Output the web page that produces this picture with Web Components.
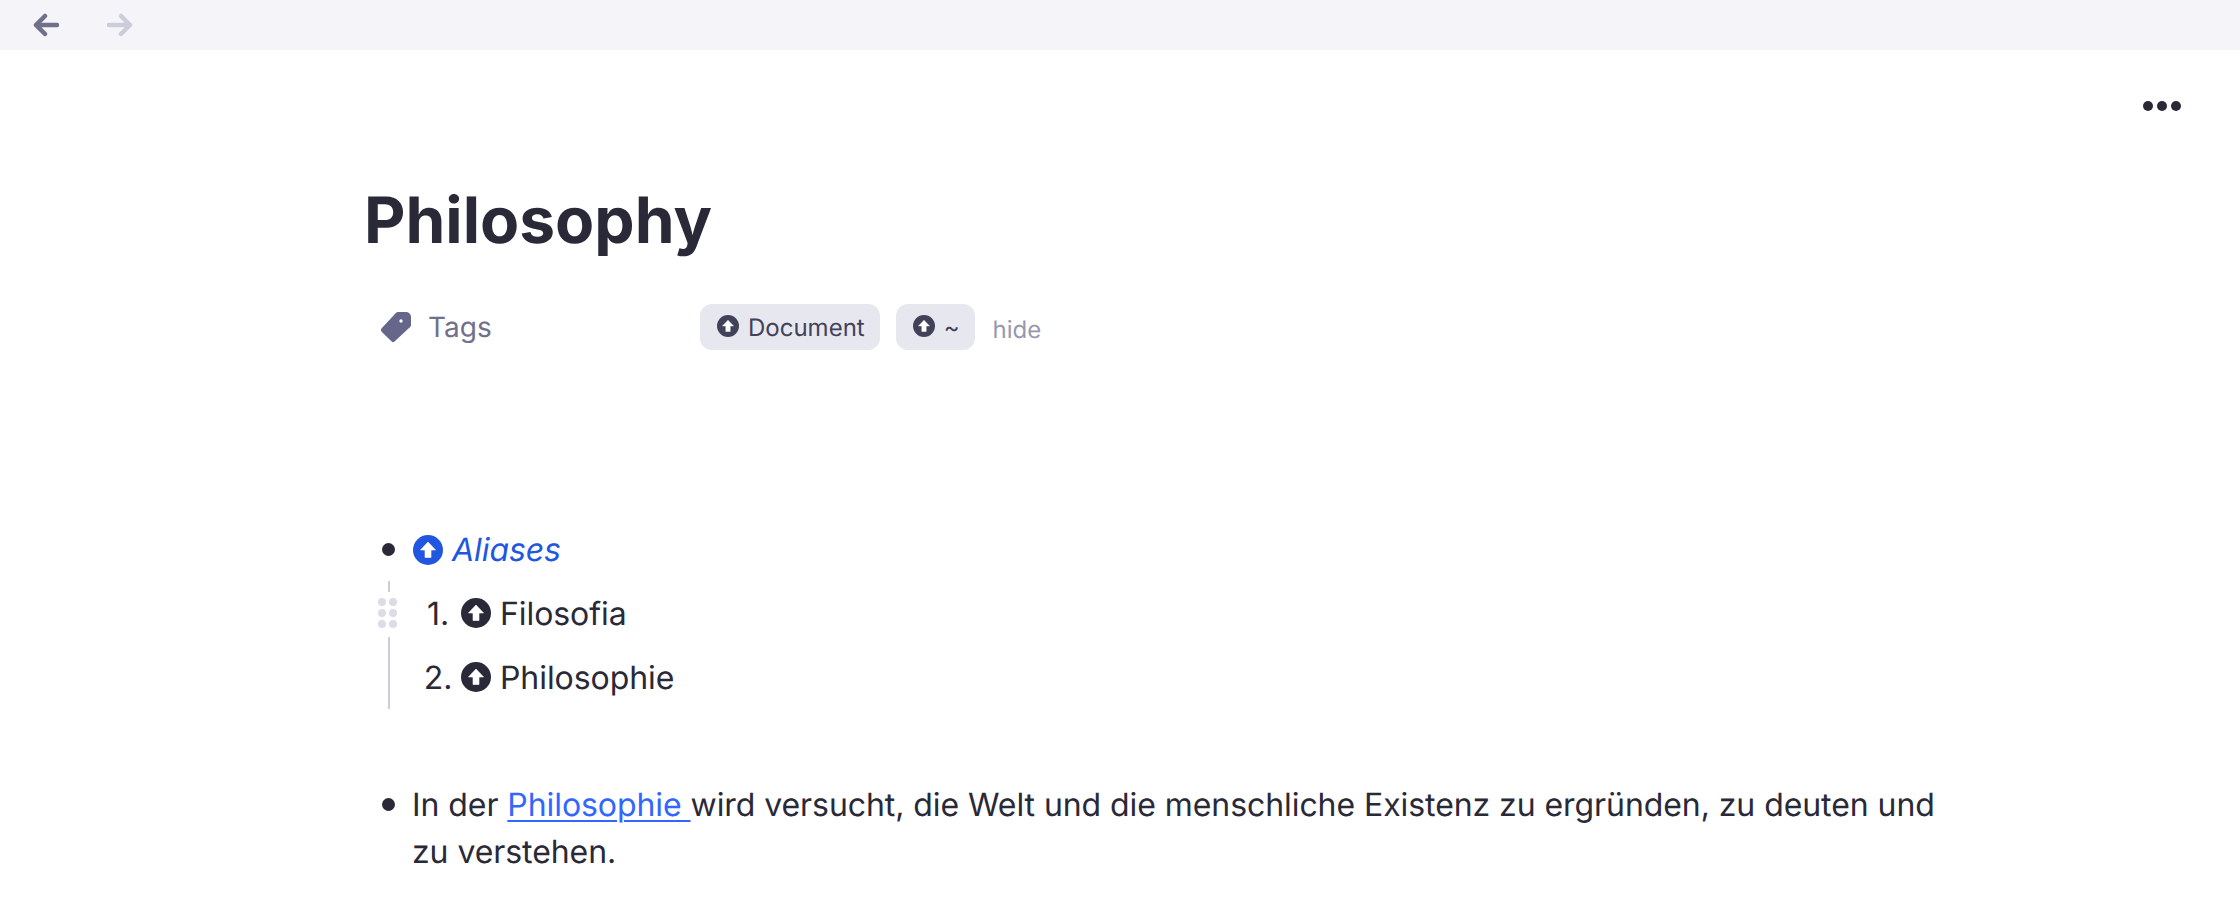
<!DOCTYPE html>
<html>
<head>
<meta charset="utf-8">
<title>Philosophy</title>
<style>
  html, body { margin: 0; background: #fff; }
  body { font-family: Inter, "Liberation Sans", sans-serif; color: #2a2937; overflow: hidden; height: 922px; text-rendering: geometricPrecision; }
</style>
</head>
<body>
<nav-bar></nav-bar>
<note-page>
  <note-title>Philosophy</note-title>
  <tag-row></tag-row>
  <bullet-item style="margin-top:176px">
    <link-icon color="#2156e0" size="30" style="top:-2px;margin-left:1px"></link-icon><em style="color:#2156e0;margin-left:9px">Aliases</em>
  </bullet-item>
  <alias-list>
    <alias-item num="1.">Filosofia</alias-item>
    <alias-item num="2.">Philosophie</alias-item>
  </alias-list>
  <bullet-item style="margin-top:72px">
    In der <a href="#" style="color:#3366ff;text-decoration:underline;text-decoration-thickness:2px;text-underline-offset:4px">Philosophie </a>wird versucht, die Welt und die menschliche Existenz zu ergründen, zu deuten und zu verstehen.
  </bullet-item>
</note-page>

<script>
class NavBar extends HTMLElement {
  constructor() {
    super();
    this.attachShadow({mode: "open"});
    this.shadowRoot.innerHTML = `
      <style>
        :host { display: flex; align-items: center; gap: 48px; height: 50px; background: #f4f4f9; padding-left: 33px; }
        svg { width: 26px; height: 24px; display: block; fill: none; stroke-width: 4.5; stroke-linecap: round; stroke-linejoin: round; }
      </style>
      <svg viewBox="0 0 26 24" stroke="#71708c"><path d="M24 12H3M12 3l-9 9 9 9"/></svg>
      <svg viewBox="0 0 26 24" stroke="#cdccdb"><path d="M2 12h21M14 3l9 9-9 9"/></svg>
    `;
  }
}
customElements.define("nav-bar", NavBar);

class NotePage extends HTMLElement {
  constructor() {
    super();
    this.attachShadow({mode: "open"});
    this.shadowRoot.innerHTML = `
      <style>
        :host { display: block; position: relative; padding: 129px 292px 0 365px; font-size: 32px; line-height: 47px; letter-spacing: -0.07px; }
        .more { position: absolute; top: 51px; right: 59px; display: flex; gap: 4px; }
        .more i { width: 10px; height: 10px; border-radius: 50%; background: #2a2937; display: block; }
      </style>
      <div class="more"><i></i><i></i><i></i></div>
      <slot></slot>
    `;
  }
}
customElements.define("note-page", NotePage);

class NoteTitle extends HTMLElement {
  constructor() {
    super();
    this.attachShadow({mode: "open"});
    this.shadowRoot.innerHTML = `
      <style>
        :host { display: block; font-size: 64px; font-weight: 700; line-height: 84px; letter-spacing: 0; color: #2a2937; margin-left: -1px; }
      </style>
      <slot></slot>
    `;
  }
}
customElements.define("note-title", NoteTitle);

class LinkIcon extends HTMLElement {
  constructor() {
    super();
    this.attachShadow({mode: "open"});
    const c = this.getAttribute("color") || "#2a2937";
    const s = this.getAttribute("size") || "30";
    this.shadowRoot.innerHTML = `
      <style>
        :host { display: inline-block; width: ${s}px; height: ${s}px; vertical-align: middle; position: relative; }
        svg { display: block; width: 100%; height: 100%; }
      </style>
      <svg viewBox="0 0 30 30">
        <circle cx="15" cy="15" r="15" fill="${c}"/>
        <path d="M15 7l7.500 8h-4.500v7.500h-6V15H7.500z" fill="#fff" stroke="#fff" stroke-width=".6" stroke-linejoin="round"/>
      </svg>
    `;
  }
}
customElements.define("link-icon", LinkIcon);

class TagPill extends HTMLElement {
  constructor() {
    super();
    this.attachShadow({mode: "open"});
    this.shadowRoot.innerHTML = `
      <style>
        :host { display: flex; align-items: center; gap: 9px; height: 46px; box-sizing: border-box; padding: 0 15px 0 17px; background: #e7e7ef; border-radius: 12px; font-size: 24px; letter-spacing: 0; color: #42415a; }
        link-icon { top: -1px; }
      </style>
      <link-icon color="#42415a" size="22"></link-icon>
      <slot></slot>
    `;
  }
}
customElements.define("tag-pill", TagPill);

class TagRow extends HTMLElement {
  constructor() {
    super();
    this.attachShadow({mode: "open"});
    this.shadowRoot.innerHTML = `
      <style>
        :host { display: flex; align-items: center; height: 46px; margin-top: 41px; }
        .label { display: flex; align-items: center; gap: 17px; width: 335px; font-size: 28px; letter-spacing: 0; color: #71708c; }
        .label svg { width: 30px; height: 30px; margin-left: 16px; display: block; }
        .pills { display: flex; gap: 16px; }
        .hide { margin-left: 18px; font-size: 24px; letter-spacing: 0; color: #9897ae; position: relative; top: 2px; }
      </style>
      <div class="label">
        <svg viewBox="0 0 30 30"><path d="M17 0h8a5 5 0 0 1 5 5v8a3 3 0 0 1-.9 2.100L14.100 29.100a2.800 2.800 0 0 1-4 0L.9 19.900a2.800 2.800 0 0 1 0-4L14.900.9A3 3 0 0 1 17 0z" fill="#66658a"/><circle cx="20" cy="9" r="1.700" fill="#fff"/></svg>
        <span>Tags</span>
      </div>
      <div class="pills">
        <tag-pill>Document</tag-pill>
        <tag-pill>~</tag-pill>
      </div>
      <span class="hide">hide</span>
    `;
  }
}
customElements.define("tag-row", TagRow);

class BulletItem extends HTMLElement {
  constructor() {
    super();
    this.attachShadow({mode: "open"});
    this.shadowRoot.innerHTML = `
      <style>
        :host { display: block; position: relative; padding-left: 47px; }
        :host::before { content: ""; position: absolute; left: 17px; top: 17px; width: 13px; height: 13px; border-radius: 50%; background: #2a2937; }
      </style>
      <slot></slot>
    `;
  }
}
customElements.define("bullet-item", BulletItem);

class AliasList extends HTMLElement {
  constructor() {
    super();
    this.attachShadow({mode: "open"});
    this.shadowRoot.innerHTML = `
      <style>
        :host { display: block; position: relative; padding-top: 8px; }
        .rail { position: absolute; left: 23px; top: 8px; width: 2px; height: 128px; background: #cdccdb; }
        .handle { position: absolute; left: 13px; top: 19px; display: grid; grid-template-columns: 8px 8px; gap: 3px; padding: 6px 0 9px; background: #fff; }
        .handle i { width: 8px; height: 8px; border-radius: 50%; background: #dcdbe6; display: block; }
      </style>
      <div class="rail"></div>
      <div class="handle"><i></i><i></i><i></i><i></i><i></i><i></i></div>
      <slot></slot>
    `;
  }
}
customElements.define("alias-list", AliasList);

class AliasItem extends HTMLElement {
  constructor() {
    super();
    this.attachShadow({mode: "open"});
    this.shadowRoot.innerHTML = `
      <style>
        :host { display: flex; align-items: center; height: 64px; padding-left: 50px; }
        .num { width: 46px; text-align: center; flex: none; }
        .body { display: flex; align-items: center; gap: 9px; }
      </style>
      <span class="num">${this.getAttribute("num")}</span>
      <span class="body"><link-icon size="30"></link-icon><slot></slot></span>
    `;
  }
}
customElements.define("alias-item", AliasItem);
</script>
</body>
</html>
